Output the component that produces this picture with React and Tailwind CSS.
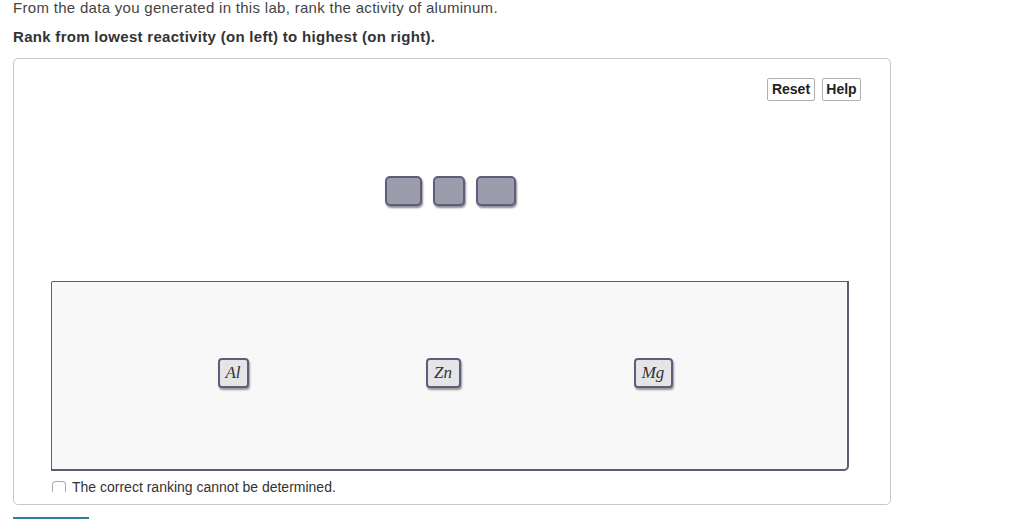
import React from "react";

const Slot = ({ w }) => (
	<div
		className={`${w} h-[30px] rounded-[5px] border-2 border-[#5d5d7c] bg-[#9c9cad] shadow-[1px_2px_2px_rgba(0,0,0,0.45)]`}
	/>
);

const Tile = ({ label, w }) => (
	<div
		className={`${w} h-[30px] flex items-center justify-center rounded-[4px] border-2 border-[#5d5d7c] bg-[#e5e5e7] shadow-[1px_2px_2px_rgba(0,0,0,0.4)] text-[17px] italic text-[#333]`}
		style={{ fontFamily: '"Liberation Serif", serif' }}
	>
		{label}
	</div>
);

const App = () => {
	return (
		<div
			className="w-[1024px] h-[519px] overflow-hidden bg-white text-[#333]"
			style={{ fontFamily: '"Liberation Sans", Arial, sans-serif' }}
		>
			<p className="pl-[13px] text-[15px] leading-[15px] tracking-[0.3px] text-[#444]">
				From the data you generated in this lab, rank the activity of aluminum.
			</p>
			<p className="pl-[13px] mt-[14px] text-[15px] leading-[16px] tracking-[0.3px] font-bold text-[#333]">
				Rank from lowest reactivity (on left) to highest (on right).
			</p>

			<div className="ml-[13px] mt-[13px] w-[878px] h-[447px] rounded-[5px] border border-[#c8c8c8] flex flex-col">
				<div className="flex justify-end gap-[7px] pt-[19px] pr-[29px]">
					<button className="h-[23px] w-[48px] rounded-[2px] border border-[#b0b0b0] bg-white text-[14px] font-bold text-[#222]">
						Reset
					</button>
					<button className="h-[23px] w-[39px] rounded-[2px] border border-[#b0b0b0] bg-white text-[14px] font-bold text-[#222]">
						Help
					</button>
				</div>

				<div className="flex justify-center gap-[11px] mt-[75px] pr-[4px]">
					<Slot w="w-[37px]" />
					<Slot w="w-[32px]" />
					<Slot w="w-[40px]" />
				</div>

				<div className="ml-[37px] mt-[75px] w-[798px] h-[190px] rounded-br-[5px] rounded-tl-[2px] border border-[#5e5e72] border-r-2 border-b-2 bg-[#f8f8f8] flex items-center pb-[6px]">
					<div className="flex pl-[76px]">
						<div className="w-[210px] flex justify-center">
							<Tile label="Al" w="w-[31px]" />
						</div>
						<div className="w-[210px] flex justify-center">
							<Tile label="Zn" w="w-[35px]" />
						</div>
						<div className="w-[210px] flex justify-center">
							<Tile label="Mg" w="w-[39px]" />
						</div>
					</div>
				</div>

				<label className="ml-[38px] mt-[8px] flex items-start gap-[6px] text-[14px] leading-[16px] text-[#333]">
					<span className="mt-[2px] w-[14px] h-[11px] rounded-t-[4px] border border-b-0 border-[#aaa] bg-white" />
					The correct ranking cannot be determined.
				</label>
			</div>

			<div className="ml-[13px] mt-[12px] w-[76px] h-[3px] bg-[#2f7fa0]" />
		</div>
	);
};

export default App;
